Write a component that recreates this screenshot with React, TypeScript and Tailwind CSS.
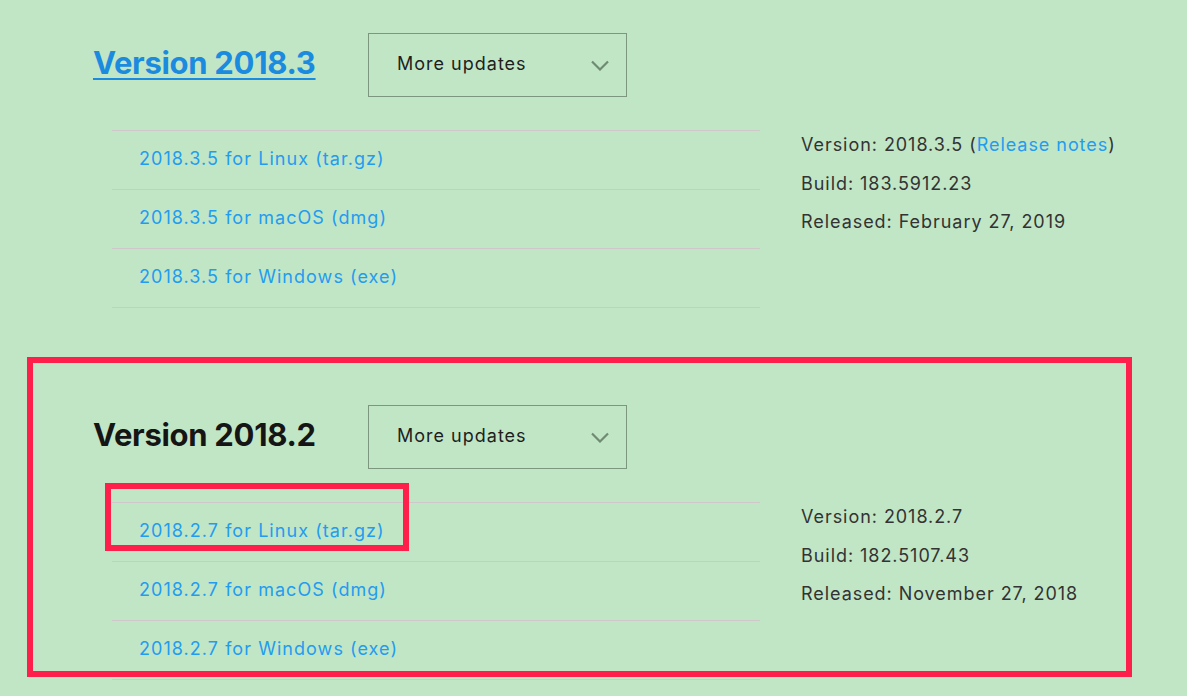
import React from 'react';

interface Release {
  title: string;
  version: string;
  build: string;
  released: string;
  linked: boolean;
  notes: boolean;
}

const releases: Release[] = [
  { title: 'Version 2018.3', version: '2018.3.5', build: '183.5912.23', released: 'February 27, 2019', linked: true, notes: true },
  { title: 'Version 2018.2', version: '2018.2.7', build: '182.5107.43', released: 'November 27, 2018', linked: false, notes: false },
];

const font = { fontFamily: 'Inter, "Noto Sans", sans-serif' };

const Chevron = () => (
  <svg width="18" height="11" viewBox="0 0 18 11" fill="none" className="text-[#6f8b72]">
    <path d="M1 1.5 L9 9.5 L17 1.5" stroke="currentColor" strokeWidth="2.2" />
  </svg>
);

const ReleaseBlock = ({ r, highlight }: { r: Release; highlight?: boolean }) => {
  const files = [`${r.version} for Linux (tar.gz)`, `${r.version} for macOS (dmg)`, `${r.version} for Windows (exe)`];
  return (
    <div className="relative">
      {highlight && (
        <>
          <div className="absolute left-[27px] top-[-48px] w-[1105px] h-[320px] border-[6px] border-[#ff1f4b] pointer-events-none" />
          <div className="absolute left-[105px] top-[78px] w-[304px] h-[68px] border-[6px] border-[#ff1f4b] pointer-events-none" />
        </>
      )}
      <div className="flex items-center h-[64px] pl-[93px]">
        <h2
          className={`w-[275px] pb-[3px] text-[31px] font-bold tracking-[-0.3px] ${
            r.linked ? 'text-[#1b8be0] underline decoration-[2px] underline-offset-[4px]' : 'text-[#151515]'
          }`}
        >
          {r.title}
        </h2>
        <div className="w-[259px] h-[64px] border border-[#7d977f] flex items-center justify-between pl-[28px] pr-[17px]">
          <span className="text-[18px] text-[#1e1e1e] tracking-[1px] pb-[3px]">More updates</span>
          <Chevron />
        </div>
      </div>
      <div className="flex items-start mt-[33px]">
        <ul className="ml-[112px] w-[648px] border-t border-[#cfc7ca]">
          {files.map((f) => (
            <li key={f} className="h-[59px] border-b border-[#cfc7ca] flex items-center pl-[27px] pb-[3px]">
              <a className="text-[18px] text-[#239cf0] tracking-[1.05px]">{f}</a>
            </li>
          ))}
        </ul>
        <div className="ml-[41px] -mt-[4px] text-[18px] text-[#333333] leading-[38.5px] tracking-[0.95px]">
          <p>
            Version: {r.version}
            {r.notes && (
              <>
                {' ('}
                <a className="text-[#239cf0]">Release notes</a>)
              </>
            )}
          </p>
          <p>Build: {r.build}</p>
          <p>Released: {r.released}</p>
        </div>
      </div>
    </div>
  );
};

export default function App() {
  return (
    <div className="w-[1187px] h-[696px] overflow-hidden bg-[#c1e6c6] pt-[33px]" style={font}>
      <ReleaseBlock r={releases[0]} />
      <div className="mt-[97px]">
        <ReleaseBlock r={releases[1]} highlight />
      </div>
    </div>
  );
}
